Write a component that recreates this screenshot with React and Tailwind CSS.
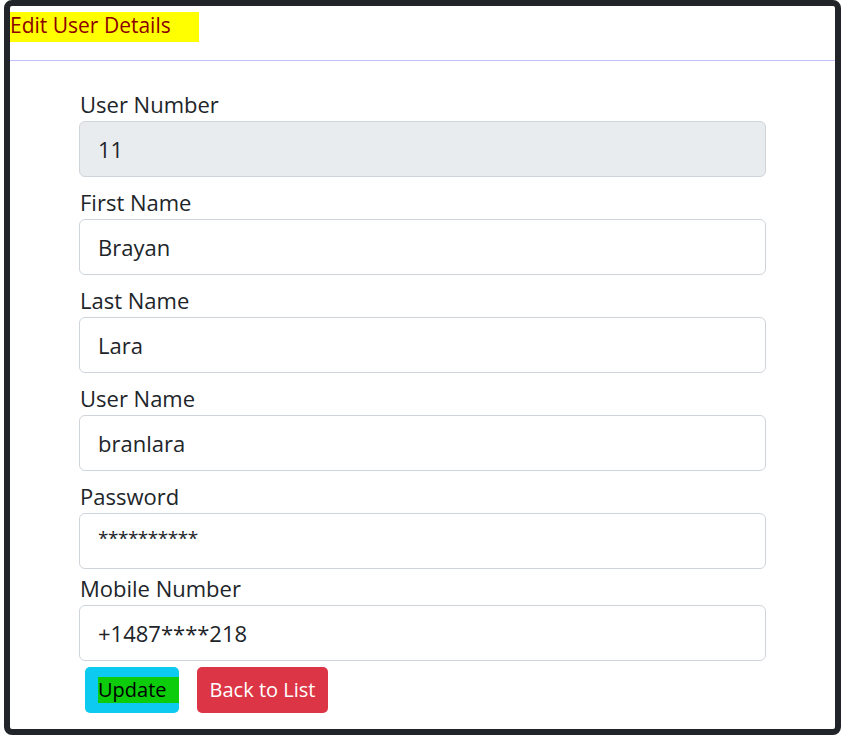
import { useState } from "react";

const fields = [
  { label: "User Number", value: "11", disabled: true },
  { label: "First Name", value: "Brayan" },
  { label: "Last Name", value: "Lara" },
  { label: "User Name", value: "branlara" },
  { label: "Password", value: "**********", small: true },
];

const Field = ({ label, value, disabled, small }) => (
  <div className="mt-[10px] first:mt-0">
    <label className="block ml-[1px] mb-[2px] h-[30px] leading-[30px] text-[22px] text-[#212529]">{label}</label>
    <input
      className={
        "block w-[687px] h-[56px] px-[18px] text-[#212529] border border-[#ced4da] rounded-[6px] outline-none " +
        (small ? "text-[19px] tracking-[-0.5px] pb-[6px] " : "text-[22px] ") +
        (disabled ? "bg-[#e9ecef]" : "bg-white")
      }
      defaultValue={value}
      disabled={disabled}
    />
  </div>
);

const App = () => {
  const [mobile, setMobile] = useState("+1487****218");

  return (
    <div className="w-[844px] h-[739px] bg-white font-['Open_Sans',sans-serif]">
      <div className="ml-[4px] w-[837px] h-[735px] border-[6px] border-[#212529] rounded-[8px] overflow-hidden">
        <div className="h-[54px] pt-[6px]">
          <span className="inline-block bg-[#ffff00] pr-[28px] pb-[4px] text-[21px] leading-[26px] text-[#8b0000]">
            Edit User Details
          </span>
        </div>
        <hr className="border-0 h-[1px] bg-[#c0c0ff]" />

        <form className="pl-[69px] pt-[28px]" onSubmit={(e) => e.preventDefault()}>
          {fields.map((f) => (
            <Field key={f.label} {...f} />
          ))}
          <div className="mt-[4px]">
            <label className="block ml-[1px] mb-[2px] h-[30px] leading-[30px] text-[22px] text-[#212529]">Mobile Number</label>
            <input
              className="block w-[687px] h-[56px] px-[18px] text-[22px] text-[#212529] border border-[#ced4da] rounded-[6px] outline-none bg-white"
              value={mobile}
              onChange={(e) => setMobile(e.target.value)}
            />
          </div>

          <div className="flex gap-[18px] ml-[6px] mt-[6px]">
            <button className="w-[94px] h-[46px] bg-[#0dcaf0] rounded-[5px] pl-[13px] flex items-center">
              <span className="bg-[#0ccc0c] w-full text-left text-[20px] leading-[26px] text-black">Update</span>
            </button>
            <button className="w-[131px] h-[46px] bg-[#dc3545] rounded-[5px] text-[20px] text-white">
              Back to List
            </button>
          </div>
        </form>
      </div>
    </div>
  );
};

export default App;
